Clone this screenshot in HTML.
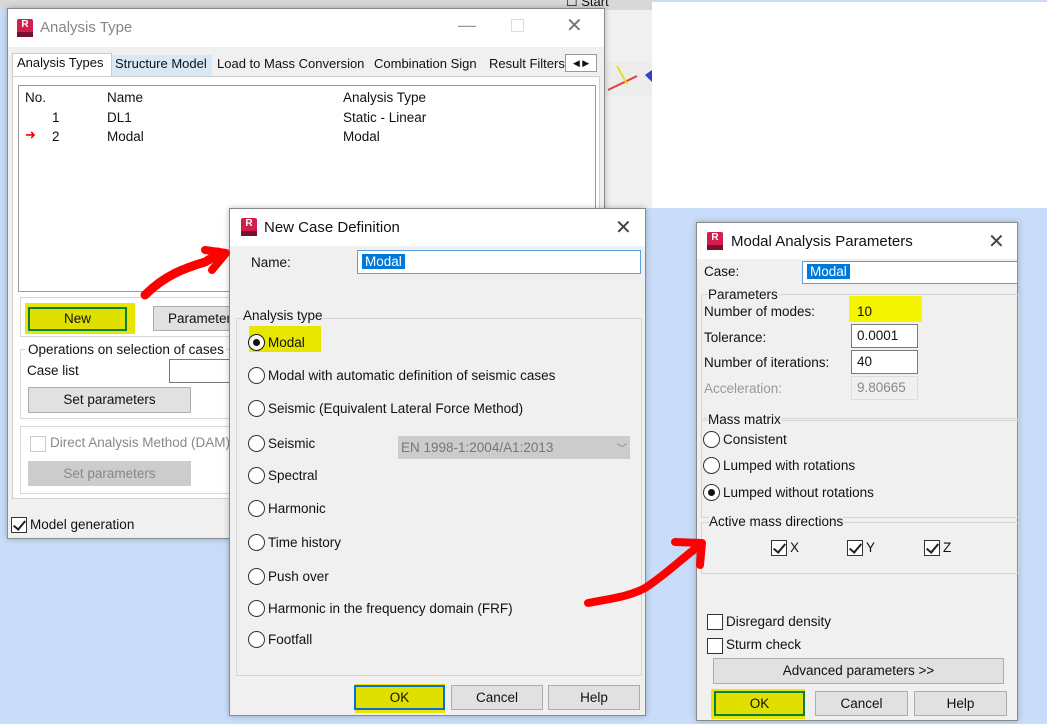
<!DOCTYPE html>
<html><head><meta charset="utf-8"><style>
*{box-sizing:border-box;margin:0;padding:0}
body{width:1047px;height:724px;overflow:hidden;position:relative;background:#c9ddfa;font-family:"Liberation Sans",sans-serif;font-size:13.5px;color:#111}
.a{position:absolute}
.dlg{position:absolute;background:#f0f0f0;border:1px solid #8a8a8a;box-shadow:0 0 6px rgba(0,0,0,.25)}
.tb{position:absolute;left:0;right:0;top:0;background:#fff}
.logo{position:absolute;width:16px;height:18px;background:#d01f4b;border-radius:2px;color:#fff;font-size:10px;font-weight:bold;text-align:center;line-height:12px}
.logo:after{content:"";position:absolute;left:0;right:0;bottom:0;height:5px;background:#7a1030}
.btn{position:absolute;background:#e1e1e1;border:1px solid #adadad;text-align:center}
.in{position:absolute;background:#fff;border:1px solid #7a7a7a}
.rad{position:absolute;width:17px;height:17px;border:1px solid #333;border-radius:50%;background:#fff}
.rad.on:after{content:"";position:absolute;left:4px;top:4px;width:7px;height:7px;border-radius:50%;background:#111}
.chk{position:absolute;width:16px;height:16px;border:1px solid #333;background:#fff}
.chk.on:after{content:"";position:absolute;left:4px;top:0px;width:5px;height:10px;border:solid #222;border-width:0 2px 2px 0;transform:rotate(40deg)}
.grp{position:absolute;border:1px solid #d6d6d6}
.sel{background:#0078d7;color:#fff;padding:0 3px}
.yl{background:#e6e600}
.tab{position:absolute;top:47px;font-size:13px}
</style></head><body>
<div class="a" style="left:0;top:0;width:652px;height:10px;background:#d8d8d8"></div>
<div class="a" style="left:605px;top:10px;width:47px;height:198px;background:#f0f0f0"></div>
<div class="a" style="left:605px;top:62px;width:47px;height:34px;background:#ececec"></div>
<svg class="a" style="left:605px;top:60px" width="47" height="36"><line x1="3" y1="30" x2="32" y2="16" stroke="#e04040" stroke-width="2"/><line x1="12" y1="6" x2="22" y2="24" stroke="#e0e020" stroke-width="2"/><path d="M40 15 L47 10 L47 22 Z" fill="#3040d0"/></svg>
<div class="a" style="left:652px;top:2px;width:395px;height:206px;background:#fff"></div>
<div class="a" style="left:566px;top:-6px;font-size:13px">☐ Start</div>

<div class="dlg" style="left:7px;top:8px;width:598px;height:531px">
 <div class="tb" style="height:38px"></div>
 <div class="logo" style="left:9px;top:10px">R</div>
 <div class="a" style="left:32px;top:10px;font-size:15px;color:#888">Analysis Type</div>
 <div class="a" style="left:450px;top:6px;font-size:18px;color:#999">—</div>
 <div class="a" style="left:503px;top:10px;width:13px;height:13px;border:1px solid #ddd"></div>
 <div class="a" style="left:558px;top:4px;font-size:20px;color:#777">✕</div>
 <div class="a" style="left:4px;top:44px;width:100px;height:24px;background:#fff;border:1px solid #ccc;border-bottom:none"></div>
 <div class="tab" style="left:9px;top:46px">Analysis Types</div>
 <div class="a" style="left:104px;top:46px;width:100px;height:21px;background:#d9e8f7"></div>
 <div class="tab" style="left:107px">Structure Model</div>
 <div class="tab" style="left:209px">Load to Mass Conversion</div>
 <div class="tab" style="left:366px">Combination Sign</div>
 <div class="tab" style="left:481px">Result Filters</div>
 <div class="a" style="left:557px;top:45px;width:32px;height:18px;background:#fff;border:1px solid #999;font-size:9px;text-align:center;line-height:16px">◀ ▶</div>
 <div class="a" style="left:4px;top:67px;width:588px;height:423px;background:#fff;border:1px solid #d0d0d0"></div>
 <div class="a" style="left:10px;top:76px;width:578px;height:207px;border:1px solid #999;background:#fff"></div>
 <div class="a" style="left:17px;top:81px">No.</div><div class="a" style="left:99px;top:81px">Name</div><div class="a" style="left:335px;top:81px">Analysis Type</div>
 <div class="a" style="left:44px;top:101px">1</div><div class="a" style="left:99px;top:101px">DL1</div><div class="a" style="left:335px;top:101px">Static - Linear</div>
 <div class="a" style="left:17px;top:118px;color:#e00;font-size:13px">➜</div><div class="a" style="left:44px;top:120px">2</div><div class="a" style="left:99px;top:120px">Modal</div><div class="a" style="left:335px;top:120px">Modal</div>
 <div class="grp" style="left:12px;top:288px;width:580px;height:40px"></div>
 <div class="a yl" style="left:17px;top:294px;width:110px;height:31px"></div>
 <div class="btn" style="left:20px;top:298px;width:99px;height:24px;background:#e0e000;border:2px solid #0b7f3a;line-height:20px">New</div>
 <div class="btn" style="left:145px;top:297px;width:80px;height:25px;line-height:23px;text-align:left;padding-left:14px">Parameters</div>
 <div class="grp" style="left:12px;top:340px;width:580px;height:70px"></div>
 <div class="a" style="left:18px;top:333px;background:#fff;padding:0 2px">Operations on selection of cases</div>
 <div class="a" style="left:19px;top:354px">Case list</div>
 <div class="in" style="left:161px;top:350px;width:70px;height:24px"></div>
 <div class="btn" style="left:20px;top:378px;width:163px;height:26px;line-height:24px">Set parameters</div>
 <div class="grp" style="left:12px;top:417px;width:580px;height:68px"></div>
 <div class="chk" style="left:22px;top:427px;border-color:#ccc"></div>
 <div class="a" style="left:42px;top:426px;color:#888">Direct Analysis Method (DAM)</div>
 <div class="btn" style="left:20px;top:452px;width:163px;height:25px;line-height:23px;color:#888;background:#ccc;border-color:#ccc">Set parameters</div>
 <div class="chk on" style="left:3px;top:508px"></div>
 <div class="a" style="left:22px;top:508px">Model generation</div>
</div>

<div class="dlg" style="left:229px;top:208px;width:417px;height:508px">
 <div class="tb" style="height:37px"></div>
 <div class="logo" style="left:11px;top:9px">R</div>
 <div class="a" style="left:34px;top:10px;font-size:15px">New Case Definition</div>
 <div class="a" style="left:385px;top:6px;font-size:20px;color:#444">✕</div>
 <div class="a" style="left:21px;top:46px">Name:</div>
 <div class="in" style="left:127px;top:41px;width:284px;height:24px;border-color:#5a9fe0;padding:3px 4px"><span class="sel">Modal</span></div>
 <div class="grp" style="left:6px;top:109px;width:406px;height:358px"></div>
 <div class="a" style="left:13px;top:99px;background:#f0f0f0">Analysis type</div>
 <div class="a yl" style="left:19px;top:117px;width:72px;height:26px"></div>
 <div class="rad on" style="left:18px;top:125px;border-color:#111"></div><div class="a" style="left:38px;top:126px">Modal</div>
 <div class="rad" style="left:18px;top:158px"></div><div class="a" style="left:38px;top:159px">Modal with automatic definition of seismic cases</div>
 <div class="rad" style="left:18px;top:191px"></div><div class="a" style="left:38px;top:192px">Seismic (Equivalent Lateral Force Method)</div>
 <div class="rad" style="left:18px;top:226px"></div><div class="a" style="left:38px;top:227px">Seismic</div>
 <div class="a" style="left:168px;top:227px;width:232px;height:23px;background:#ccc;color:#777;padding:4px 3px">EN 1998-1:2004/A1:2013<span style="float:right;font-size:10px">﹀</span></div>
 <div class="rad" style="left:18px;top:258px"></div><div class="a" style="left:38px;top:259px">Spectral</div>
 <div class="rad" style="left:18px;top:291px"></div><div class="a" style="left:38px;top:292px">Harmonic</div>
 <div class="rad" style="left:18px;top:325px"></div><div class="a" style="left:38px;top:326px">Time history</div>
 <div class="rad" style="left:18px;top:359px"></div><div class="a" style="left:38px;top:360px">Push over</div>
 <div class="rad" style="left:18px;top:391px"></div><div class="a" style="left:38px;top:392px">Harmonic in the frequency domain (FRF)</div>
 <div class="rad" style="left:18px;top:422px"></div><div class="a" style="left:38px;top:423px">Footfall</div>
 <div class="a yl" style="left:125px;top:475px;width:90px;height:29px"></div>
 <div class="btn" style="left:124px;top:476px;width:91px;height:25px;background:#e0e000;border:2px solid #0b6fd0;line-height:21px">OK</div>
 <div class="btn" style="left:221px;top:476px;width:92px;height:25px;line-height:23px">Cancel</div>
 <div class="btn" style="left:318px;top:476px;width:92px;height:25px;line-height:23px">Help</div>
</div>

<div class="dlg" style="left:696px;top:222px;width:322px;height:499px">
 <div class="tb" style="height:36px"></div>
 <div class="logo" style="left:10px;top:9px">R</div>
 <div class="a" style="left:34px;top:10px;font-size:15px">Modal Analysis Parameters</div>
 <div class="a" style="left:291px;top:6px;font-size:20px;color:#444">✕</div>
 <div class="a" style="left:7px;top:41px">Case:</div>
 <div class="in" style="left:105px;top:38px;width:216px;height:23px;border-color:#5a9fe0;padding:2px 4px"><span class="sel">Modal</span></div>
 <div class="grp" style="left:4px;top:71px;width:318px;height:125px"></div>
 <div class="a" style="left:11px;top:64px;background:#f0f0f0">Parameters</div>
 <div class="a" style="left:7px;top:81px">Number of modes:</div>
 <div class="a" style="left:152px;top:73px;width:73px;height:26px;background:#f5f500"></div>
 <div class="a" style="left:160px;top:81px">10</div>
 <div class="in" style="left:154px;top:101px;width:67px;height:24px;padding:3px 5px">0.0001</div>
 <div class="a" style="left:7px;top:107px">Tolerance:</div>
 <div class="in" style="left:154px;top:127px;width:67px;height:24px;padding:3px 5px">40</div>
 <div class="a" style="left:7px;top:132px">Number of iterations:</div>
 <div class="in" style="left:154px;top:153px;width:67px;height:24px;padding:3px 5px;color:#888;border-color:#ddd;background:#f0f0f0">9.80665</div>
 <div class="a" style="left:7px;top:158px;color:#999">Acceleration:</div>
 <div class="grp" style="left:4px;top:197px;width:318px;height:98px"></div>
 <div class="a" style="left:11px;top:189px;background:#f0f0f0">Mass matrix</div>
 <div class="rad" style="left:6px;top:208px"></div><div class="a" style="left:26px;top:209px">Consistent</div>
 <div class="rad" style="left:6px;top:234px"></div><div class="a" style="left:26px;top:235px">Lumped with rotations</div>
 <div class="rad on" style="left:6px;top:261px"></div><div class="a" style="left:26px;top:262px">Lumped without rotations</div>
 <div class="grp" style="left:4px;top:299px;width:318px;height:52px"></div>
 <div class="a" style="left:12px;top:291px;background:#f0f0f0">Active mass directions</div>
 <div class="chk on" style="left:74px;top:317px"></div><div class="a" style="left:93px;top:317px">X</div>
 <div class="chk on" style="left:150px;top:317px"></div><div class="a" style="left:169px;top:317px">Y</div>
 <div class="chk on" style="left:227px;top:317px"></div><div class="a" style="left:246px;top:317px">Z</div>
 <div class="chk" style="left:10px;top:391px"></div><div class="a" style="left:29px;top:391px">Disregard density</div>
 <div class="chk" style="left:10px;top:415px"></div><div class="a" style="left:29px;top:414px">Sturm check</div>
 <div class="btn" style="left:16px;top:435px;width:291px;height:26px;line-height:24px">Advanced parameters &gt;&gt;</div>
 <div class="a yl" style="left:14px;top:466px;width:94px;height:30px"></div>
 <div class="btn" style="left:17px;top:468px;width:91px;height:25px;background:#e0e000;border:2px solid #0b7f3a;line-height:21px">OK</div>
 <div class="btn" style="left:118px;top:468px;width:93px;height:25px;line-height:23px">Cancel</div>
 <div class="btn" style="left:217px;top:468px;width:93px;height:25px;line-height:23px">Help</div>
</div>

<svg class="a" style="left:0;top:0" width="1047" height="724">
 <path d="M145 295 C165 275 185 268 205 262 C212 258 216 256 218 252" stroke="#f00" stroke-width="9" fill="none" stroke-linecap="round"/>
 <path d="M205 250 L226 253 L212 270" stroke="#f00" stroke-width="8" fill="none" stroke-linecap="round" stroke-linejoin="round"/>
 <path d="M588 603 C615 598 630 596 645 588 C665 575 680 560 700 545" stroke="#f00" stroke-width="8" fill="none" stroke-linecap="round"/>
 <path d="M675 542 L702 543 L700 565" stroke="#f00" stroke-width="8" fill="none" stroke-linecap="round" stroke-linejoin="round"/>
</svg>
</body></html>
